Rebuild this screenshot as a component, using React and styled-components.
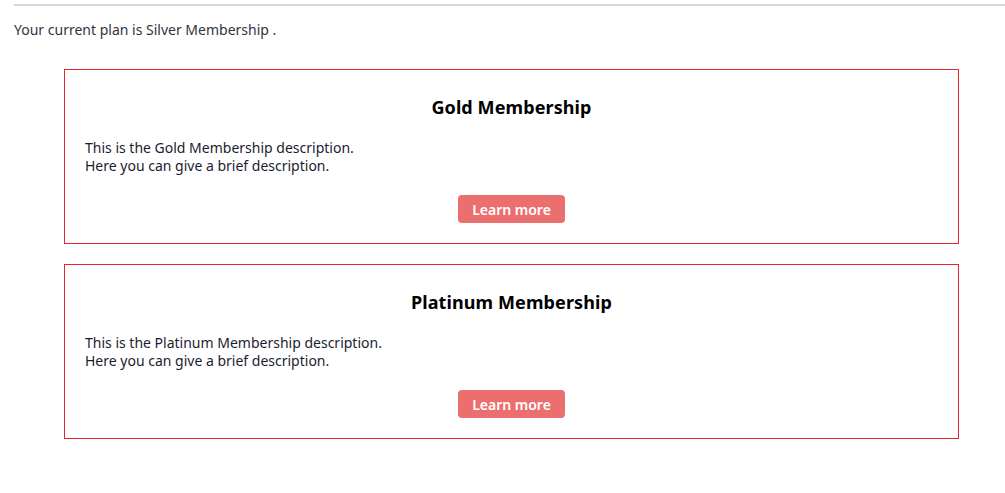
import React from "react";
import styled, { createGlobalStyle } from "styled-components";

const GlobalStyle = createGlobalStyle`
  body {
    margin: 0;
    background: #fff;
    font-family: "Noto Sans", "Open Sans", sans-serif;
  }
`;

const Page = styled.div`
  padding: 4px 0 40px 14px;
`;

const Divider = styled.div`
  height: 2px;
  background-color: #d5d7db;
`;

const CurrentPlan = styled.p`
  margin: 14px 0 29px;
  font-size: 14px;
  line-height: 20px;
  color: #33333f;
`;

const CardList = styled.div`
  display: flex;
  flex-direction: column;
  gap: 20px;
  margin: 0 46px 0 50px;
`;

const Card = styled.div`
  border: 1px solid #e8262b;
  padding: 24px 20px 20px;
  display: flex;
  flex-direction: column;
`;

const Title = styled.h3`
  margin: 0 0 19px;
  text-align: center;
  font-size: 18px;
  letter-spacing: 0.1px;
  line-height: 26px;
  font-weight: 700;
  color: #000;
`;

const Description = styled.p`
  margin: 0 0 20px;
  font-size: 14px;
  line-height: 18px;
  color: #1c1c30;
`;

const Button = styled.button`
  align-self: center;
  width: 107px;
  height: 28px;
  border: none;
  border-radius: 4px;
  background-color: #ec6f6f;
  color: #fff;
  font-family: "Noto Sans", "Open Sans", sans-serif;
  font-size: 14px;
  font-weight: 600;
  cursor: pointer;
  padding: 0;
`;

const plans = [
  { id: "gold", name: "Gold Membership" },
  { id: "platinum", name: "Platinum Membership" },
];

const App = () => {
  return (
    <>
      <GlobalStyle />
      <Page>
        <Divider />
        <CurrentPlan>Your current plan is Silver Membership .</CurrentPlan>
        <CardList>
          {plans.map(({ id, name }) => (
            <Card key={id}>
              <Title>{name}</Title>
              <Description>
                This is the {name} description.
                <br />
                Here you can give a brief description.
              </Description>
              <Button>Learn more</Button>
            </Card>
          ))}
        </CardList>
      </Page>
    </>
  );
};

export default App;
